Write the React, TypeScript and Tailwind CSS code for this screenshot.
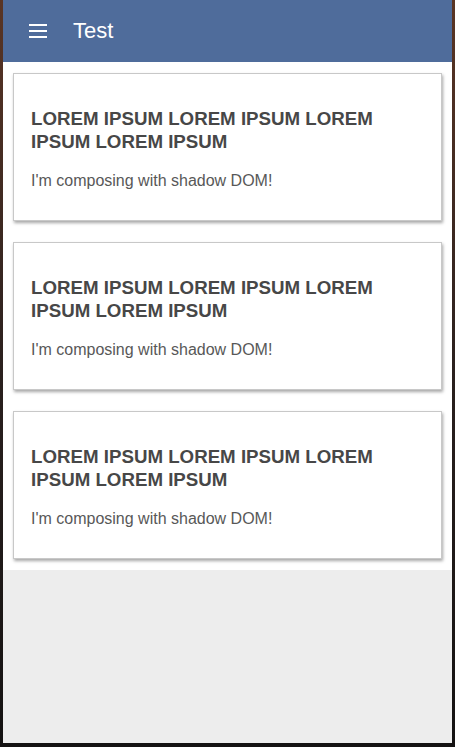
const cards = [1, 2, 3];

const MenuIcon = () => (
  <svg width="18" height="14" viewBox="0 0 18 14" aria-hidden="true">
    <rect x="0" y="0" width="18" height="2" fill="#ffffff" />
    <rect x="0" y="6" width="18" height="2" fill="#ffffff" />
    <rect x="0" y="12" width="18" height="2" fill="#ffffff" />
  </svg>
);

const Card = () => (
  <div className="border border-[#c8c8c8] bg-white px-[17px] pt-[34px] pb-[27px] shadow-[1px_2px_3px_rgba(0,0,0,0.35)]">
    <h2 className="text-[18.72px] leading-[22.5px] font-bold uppercase text-[#474747]">
      Lorem ipsum lorem ipsum lorem ipsum lorem ipsum
    </h2>
    <p className="mt-[16px] text-[16px] leading-[24px] text-[#585858]">
      I'm composing with shadow DOM!
    </p>
  </div>
);

export default function App() {
  return (
    <div className="flex h-[747px] w-[455px] bg-gradient-to-b from-[#5a3524] via-[#2a201e] to-[#141212] px-[3px] pb-[4px] font-['Liberation_Sans',Arial,sans-serif]">
      <div className="flex flex-1 flex-col bg-[#ededed]">
        {/* Header */}
        <header className="flex h-[62px] shrink-0 items-center bg-[#4f6c9b] pl-[26px]">
          <MenuIcon />
          <h1 className="ml-[26px] text-[22px] leading-none text-white">Test</h1>
        </header>

        {/* Cards */}
        <main className="flex flex-col gap-[21px] bg-white px-[10px] pt-[11px] pb-[11px]">
          {cards.map((c) => (
            <Card key={c} />
          ))}
        </main>
      </div>
    </div>
  );
}
